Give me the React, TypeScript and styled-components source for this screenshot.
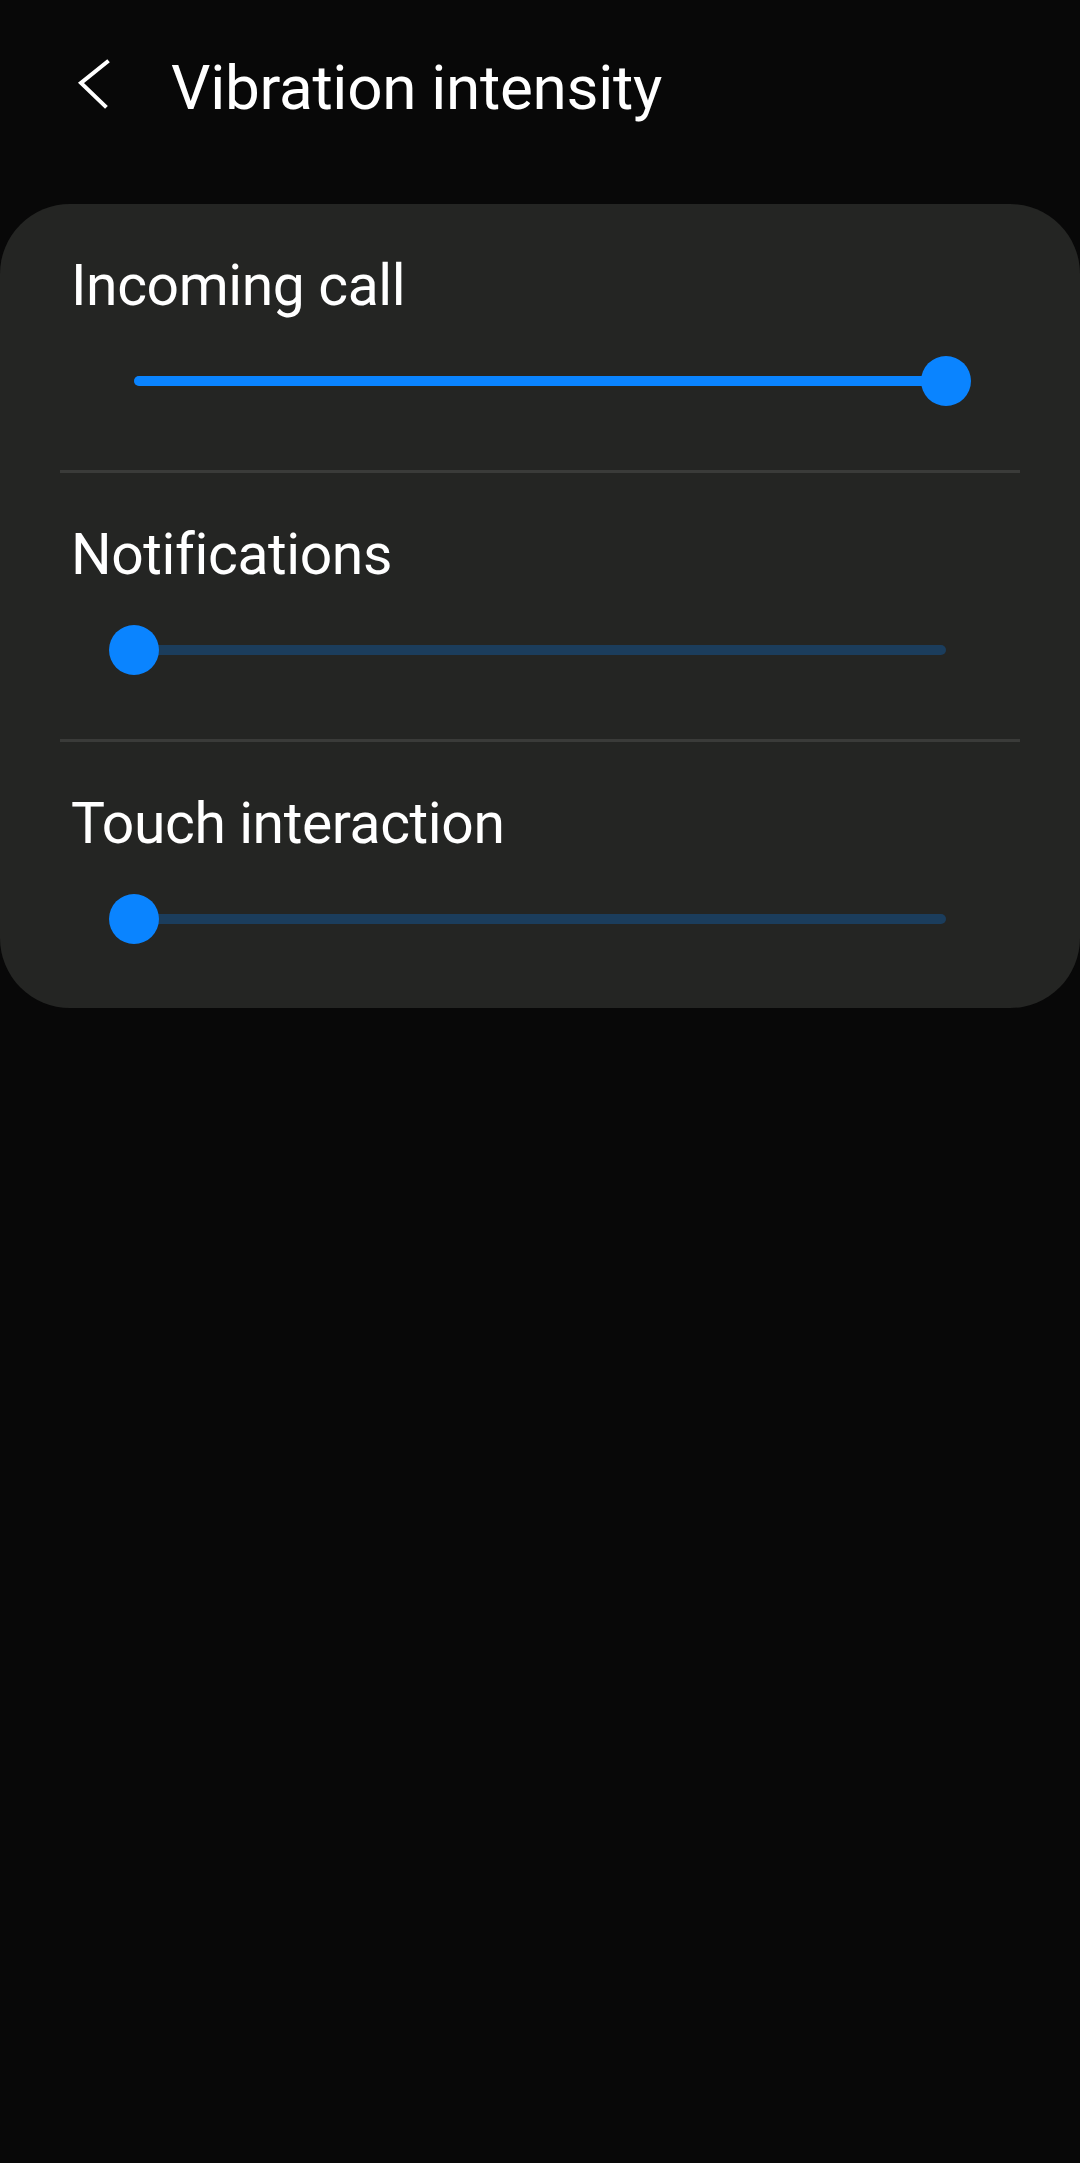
import React from 'react';
import styled, {createGlobalStyle} from 'styled-components';

const GlobalStyle = createGlobalStyle`
  html, body {
    margin: 0;
    padding: 0;
    background: #080808;
  }
  body {
    font-family: Roboto, "Noto Sans", "Liberation Sans", sans-serif;
    color: #ffffff;
  }
`

type Item = {
    label: string;
    value: number;
}

const items: Item[] = [
    {label: 'Incoming call', value: 1},
    {label: 'Notifications', value: 0},
    {label: 'Touch interaction', value: 0},
];

function App() {
    return (
        <Page>
            <GlobalStyle/>
            <Header>
                <BackButton aria-label="Back">
                    <svg width="40" height="60" viewBox="0 0 40 60" fill="none">
                        <path d="M33 4 L7 25 L31 48" stroke="#ffffff" strokeWidth="4" strokeLinecap="square"/>
                    </svg>
                </BackButton>
                <Title>Vibration intensity</Title>
            </Header>
            <Card>
                {items.map((item, i) => (
                    <React.Fragment key={item.label}>
                        {i > 0 && <Divider/>}
                        <Row>
                            <Label>{item.label}</Label>
                            <Slider>
                                <Track>
                                    <Fill style={{width: `${item.value * 100}%`}}/>
                                    <Thumb style={{left: `${item.value * 100}%`}}/>
                                </Track>
                            </Slider>
                        </Row>
                    </React.Fragment>
                ))}
            </Card>
        </Page>
    );
}

export default App;

const Page = styled.div`
  width: 1080px;
  min-height: 2163px;
  background: #080808;
`

const Header = styled.div`
  display: flex;
  align-items: center;
  height: 204px;
  padding-left: 74px;
  padding-bottom: 28px;
  box-sizing: border-box;
`

const BackButton = styled.div`
  display: flex;
  align-items: center;
  width: 97px;
  height: 60px;
`

const Title = styled.h1`
  margin: 0;
  font-size: 62px;
  font-weight: 400;
  line-height: 72px;
  color: #ffffff;
  letter-spacing: -0.3px;
`

const Card = styled.div`
  display: flex;
  flex-direction: column;
  background: #242523;
  border-radius: 70px;
`

const Row = styled.div`
  display: flex;
  flex-direction: column;
  padding: 48px 0 59px 71px;
`

const Divider = styled.div`
  height: 3px;
  margin: 0 60px;
  background: #3a3b39;
`

const Label = styled.div`
  font-size: 57px;
  line-height: 68px;
  font-weight: 400;
  color: #ffffff;
  letter-spacing: -0.4px;
`

const Slider = styled.div`
  display: flex;
  align-items: center;
  height: 60px;
  margin-top: 31px;
  padding-left: 63px;
`

const Track = styled.div`
  position: relative;
  width: 812px;
  height: 10px;
  border-radius: 5px;
  background: #1b3d5c;
`

const Fill = styled.div`
  height: 100%;
  border-radius: 5px;
  background: #0a84ff;
`

const Thumb = styled.div`
  position: absolute;
  top: 50%;
  width: 50px;
  height: 50px;
  border-radius: 50%;
  background: #0a84ff;
  transform: translate(-50%, -50%);
`
